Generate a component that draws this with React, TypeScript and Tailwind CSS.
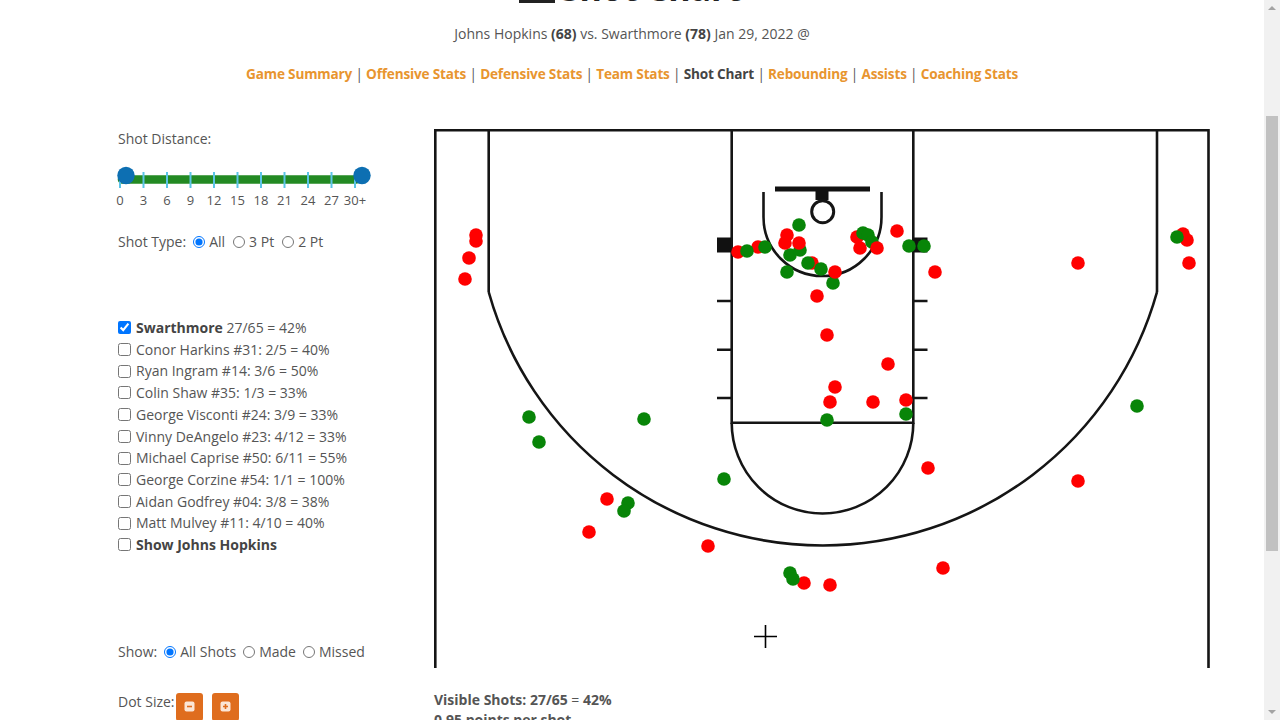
import React from "react";

type Shot = [number, number];

// missed shots (drawn first), made shots, then a few misses that sit on top
const missed: Shot[] = [
  [476, 235], [476, 241], [469, 258], [465, 279],
  [738, 252], [758, 247], [812, 263], [817, 296], [857, 237], [860, 248], [897, 231], [935, 272],
  [827, 335], [888, 364], [835, 387], [830, 402], [873, 402], [906, 400],
  [928, 468], [708, 546], [804, 583], [830, 585], [943, 568],
  [607, 499], [589, 532],
  [1078, 263], [1078, 481], [1183, 234], [1187, 240], [1189, 263],
];
const made: Shot[] = [
  [747, 251], [765, 247], [799, 225], [790, 255], [787, 272], [808, 263], [821, 269], [833, 283],
  [863, 233], [868, 235], [872, 242], [909, 246], [924, 246], [800, 250],
  [827, 420], [906, 414],
  [724, 479], [790, 573], [793, 579],
  [529, 417], [539, 442], [644, 419], [628, 503], [624, 511],
  [1137, 406], [1177, 237],
];
const missedTop: Shot[] = [[787, 235], [785, 243], [799, 243], [835, 272], [877, 248]];

const players = [
  "Conor Harkins #31: 2/5 = 40%",
  "Ryan Ingram #14: 3/6 = 50%",
  "Colin Shaw #35: 1/3 = 33%",
  "George Visconti #24: 3/9 = 33%",
  "Vinny DeAngelo #23: 4/12 = 33%",
  "Michael Caprise #50: 6/11 = 55%",
  "George Corzine #54: 1/1 = 100%",
  "Aidan Godfrey #04: 3/8 = 38%",
  "Matt Mulvey #11: 4/10 = 40%",
];

const navLinks = [
  "Game Summary",
  "Offensive Stats",
  "Defensive Stats",
  "Team Stats",
  "Shot Chart",
  "Rebounding",
  "Assists",
  "Coaching Stats",
];

function Court() {
  const line = { stroke: "#151515", strokeWidth: 2.6, fill: "none" };
  return (
    <svg width={777} height={539} viewBox="434 129 777 539" className="block">
      <path d="M435.3,668 V130.3 H1208.5 V668" {...line} />
      <path d="M488.7,130 V292 M1157,130 V292" {...line} />
      <path d="M488.7,292 A347 347 0 0 0 1157,292" {...line} />
      <path d="M731.7,130 V422.7 H913.3 V130" {...line} />
      <path d="M731.7,422.7 A90.8 90.8 0 0 0 913.3,422.7" {...line} />
      <path d="M717,301 H731 M717,349.7 H731 M717,398 H731 M913,301 H927.5 M913,349.7 H927.5 M913,398 H927.5" {...line} />
      <rect x={717} y={237.5} width={14} height={15} fill="#111" />
      <rect x={913.5} y={237.5} width={14} height={15} fill="#111" />
      <rect x={775} y={186.5} width={95} height={5} fill="#111" />
      <rect x={815.5} y={190} width={13} height={10} fill="#111" />
      <circle cx={822.7} cy={211.7} r={11} fill="#fff" stroke="#151515" strokeWidth={3} />
      <path d="M763.5,192 V217 A59 59 0 0 0 881.5,217 V192" {...line} />
      {missed.map(([x, y], i) => (
        <circle key={"m" + i} cx={x} cy={y} r={6.8} fill="#ff0000" />
      ))}
      {made.map(([x, y], i) => (
        <circle key={"g" + i} cx={x} cy={y} r={6.8} fill="#088508" />
      ))}
      {missedTop.map(([x, y], i) => (
        <circle key={"t" + i} cx={x} cy={y} r={6.8} fill="#ff0000" />
      ))}
      {/* mouse cursor */}
      <path d="M754,636.5 H777 M765.5,625 V648" stroke="#000" strokeWidth={1.6} />
    </svg>
  );
}

function DistanceSlider() {
  const ticks = Array.from({ length: 11 }, (_, i) => 120 + i * 23.5);
  const labels = ["0", "3", "6", "9", "12", "15", "18", "21", "24", "27", "30+"];
  return (
    <div className="mt-[15px] -ml-[8px]">
      <svg width={266} height={26} viewBox="110 164 266 26" className="block">
        <line x1={122} y1={179.5} x2={356} y2={179.5} stroke="#238a23" strokeWidth={8.5} strokeLinecap="round" />
        {ticks.map((x) => (
          <line key={x} x1={x} y1={172} x2={x} y2={188} stroke="#5bc4e6" strokeWidth={2} />
        ))}
        <circle cx={126} cy={175.5} r={8.7} fill="#0d6fb2" />
        <circle cx={362} cy={175.5} r={8.7} fill="#0d6fb2" />
      </svg>
      <div className="mt-[1px] -ml-[1.75px] flex text-[13px] leading-[18px]">
        {labels.map((l) => (
          <span key={l} className="w-[23.5px] text-center whitespace-nowrap">
            {l}
          </span>
        ))}
      </div>
    </div>
  );
}

function Radio({ label, checked }: { label: string; checked?: boolean }) {
  return (
    <label className="inline-flex items-center">
      <input type="radio" readOnly checked={!!checked} className="m-0 mr-[4px] h-[12px] w-[12px] accent-[#0075ff]" />
      <span>{label}</span>
    </label>
  );
}

function OrangeButton({ plus }: { plus?: boolean }) {
  return (
    <button className="flex h-[28px] w-[27px] items-center justify-center rounded-[3px] bg-[#df6d1e]">
      <svg width={11} height={11} viewBox="0 0 11 11">
        <rect x={0.5} y={0.5} width={10} height={10} rx={2} fill="#fbe6d6" />
        <path d={plus ? "M3,5.5 H8 M5.5,3 V8" : "M3,5.5 H8"} stroke="#df6d1e" strokeWidth={1.6} />
      </svg>
    </button>
  );
}

export default function App() {
  return (
    <div className="flex h-[720px] w-[1280px] overflow-hidden bg-white font-['Open_Sans',sans-serif] text-[14px] text-[#555]">
      <div className="flex flex-1 flex-col">
        <header className="flex flex-col items-center">
          <div className="-mt-[32px] flex h-[40px] items-end gap-[6px] pr-[4px]">
            <div className="mb-[5px] h-[3px] w-[36px] bg-[#222]" />
            <h1 className="text-[34px] font-bold leading-[40px] text-[#222]">Shot Chart</h1>
          </div>
          <p className="mt-[16px] leading-[20px]">
            Johns Hopkins <b className="text-[#444]">(68)</b> vs. Swarthmore <b className="text-[#444]">(78)</b> Jan 29, 2022 @
          </p>
          <nav className="mt-[20px] text-[13.6px] font-bold leading-[20px] tracking-[-0.18px]">
            {navLinks.map((n, i) => (
              <React.Fragment key={n}>
                {i > 0 && <span className="font-normal text-[#555]"> | </span>}
                <span className={n === "Shot Chart" ? "text-[#444]" : "text-[#e8952f]"}>{n}</span>
              </React.Fragment>
            ))}
          </nav>
        </header>

        <div className="mt-[45px] flex pl-[118px]">
          <aside className="w-[316px] shrink-0">
            <div className="leading-[20px]">Shot Distance:</div>
            <DistanceSlider />
            <div className="mt-[23px] flex items-center gap-[8px] leading-[20px]">
              <span className="mr-[-1px]">Shot Type:</span>
              <Radio label="All" checked />
              <Radio label="3 Pt" />
              <Radio label="2 Pt" />
            </div>

            <ul className="mt-[65px] leading-[21.7px]">
              <li className="flex items-center">
                <input type="checkbox" readOnly checked className="m-0 mr-[5px] h-[13px] w-[13px] accent-[#0075ff]" />
                <span>
                  <b className="text-[#444]">Swarthmore</b> 27/65 = 42%
                </span>
              </li>
              {players.map((p) => (
                <li key={p} className="flex items-center">
                  <input type="checkbox" readOnly className="m-0 mr-[5px] h-[13px] w-[13px]" />
                  <span>{p}</span>
                </li>
              ))}
              <li className="flex items-center">
                <input type="checkbox" readOnly className="m-0 mr-[5px] h-[13px] w-[13px]" />
                <b className="text-[#444]">Show Johns Hopkins</b>
              </li>
            </ul>

            <div className="mt-[86px] flex items-center gap-[7px] leading-[20px]">
              <span>Show:</span>
              <Radio label="All Shots" checked />
              <Radio label="Made" />
              <Radio label="Missed" />
            </div>

            <div className="mt-[30px] flex items-start leading-[20px]">
              <span>Dot Size:</span>
              <div className="ml-[1px] mt-[1px] flex gap-[9px]">
                <OrangeButton />
                <OrangeButton plus />
              </div>
            </div>
          </aside>

          <section className="w-[777px] shrink-0">
            <Court />
            <div className="mt-[22px] font-bold leading-[20px]">
              Visible Shots: 27/65 <span className="font-normal">=</span> 42%
            </div>
            <div className="font-bold leading-[20px]">0.95 points per shot</div>
          </section>
        </div>
      </div>

      {/* scrollbar */}
      <div className="flex w-[16px] shrink-0 flex-col items-center bg-[#f1f1f1]">
        <div className="mt-[6px] h-0 w-0 border-x-[4px] border-b-[4px] border-x-transparent border-b-[#a3a3a3]" />
        <div className="mt-[106px] h-[435px] w-[12px] bg-[#c1c1c1]" />
        <div className="mt-auto mb-[6px] h-0 w-0 border-x-[4px] border-t-[4px] border-x-transparent border-t-[#a3a3a3]" />
      </div>
    </div>
  );
}
